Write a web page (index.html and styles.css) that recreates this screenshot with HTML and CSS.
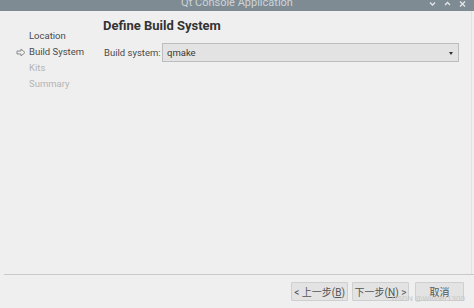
FILE: index.html
```html
<!DOCTYPE html>
<html lang="zh">
<head>
  <meta charset="UTF-8">
  <title>Qt Console Application</title>
  <link rel="stylesheet" href="styles.css">
</head>
<body>
  <div class="window">
    <div class="titlebar">
      <span class="title">Qt Console Application</span>
      <div class="controls">
        <svg width="7" height="6" viewBox="0 0 7 6"><path d="M1 1.5 L3.5 4 L6 1.5" fill="none" stroke="#e4e8ea" stroke-width="1.3"/></svg>
        <svg width="7" height="6" viewBox="0 0 7 6"><path d="M1 4 L3.5 1.5 L6 4" fill="none" stroke="#e4e8ea" stroke-width="1.3"/></svg>
        <svg width="7" height="6" viewBox="0 0 7 6"><path d="M1 0.5 L6 5.5 M6 0.5 L1 5.5" fill="none" stroke="#e4e8ea" stroke-width="1.3"/></svg>
      </div>
    </div>

    <div class="main">
      <!-- wizard steps -->
      <ul class="steps">
        <li>Location</li>
        <li class="current">
          <svg class="arrow" width="10" height="9" viewBox="0 0 10 9">
            <path d="M1 3 H5 V1 L9 4.5 L5 8 V6 H1 Z" fill="none" stroke="#8a8a8a" stroke-width="1"/>
          </svg>
          Build System
        </li>
        <li class="todo">Kits</li>
        <li class="todo">Summary</li>
      </ul>

      <div class="page">
        <h2>Define Build System</h2>
        <div class="field">
          <label>Build system:</label>
          <div class="combo">
            <span>qmake</span>
            <span class="drop"></span>
          </div>
        </div>
      </div>
    </div>

    <div class="footer">
      <button>&lt; 上一步(<u>B</u>)</button>
      <button>下一步(<u>N</u>) &gt;</button>
      <button class="cancel">取消</button>
      <span class="watermark">CSDN @Winner1300</span>
    </div>
  </div>
</body>
</html>
```

FILE: styles.css
```css
body {
  margin: 0;
  font-family: Roboto, "Noto Sans CJK SC", sans-serif;
  background-color: #efefef;
}
.window {
  width: 474px;
  height: 308px;
  display: flex;
  flex-direction: column;
  background-color: #efefef;
  overflow: hidden;
}
.titlebar {
  height: 11px;
  background-color: #7e8b93;
  position: relative;
  overflow: hidden;
  flex-shrink: 0;
}
.title {
  display: block;
  text-align: center;
  color: #cdd4d8;
  font-size: 11px;
  line-height: 11px;
  margin-top: -3px;
}
.controls {
  position: absolute;
  right: 8px;
  top: 1px;
  display: flex;
  gap: 8px;
}
.main {
  flex: 1;
  display: flex;
  border-right: 1px solid #e2e2e2;
  margin-right: 2px;
}
.steps {
  list-style: none;
  margin: 0;
  padding: 17px 0 0 29px;
  width: 74px;
  font-size: 9.5px;
  line-height: 16px;
  color: #4a4a4a;
}
.steps li {
  position: relative;
  white-space: nowrap;
}
.steps .todo {
  color: #b4b4b4;
}
.arrow {
  position: absolute;
  left: -13px;
  top: 4px;
}
.page {
  flex: 1;
  padding: 7px 0 0 0;
}
h2 {
  margin: 0;
  font-size: 13px;
  line-height: 16px;
  font-weight: bold;
  color: #333;
}
.field {
  display: flex;
  align-items: center;
  margin-top: 9px;
  font-size: 9.5px;
  color: #4a4a4a;
}
label {
  width: 58px;
  padding-left: 1px;
  white-space: nowrap;
}
.combo {
  width: 297px;
  height: 19px;
  box-sizing: border-box;
  border: 1px solid #bdbdbd;
  background-color: #e3e3e3;
  display: flex;
  align-items: center;
  justify-content: space-between;
  padding: 0 5px 0 4px;
  color: #3a3a3a;
}
.drop {
  width: 0;
  height: 0;
  border-left: 2px solid transparent;
  border-right: 2px solid transparent;
  border-top: 3px solid #333;
  margin-top: 2px;
}
.footer {
  height: 34px;
  flex-shrink: 0;
  border-top: 1px solid #c9c9c9;
  box-sizing: border-box;
  display: flex;
  align-items: flex-start;
  justify-content: flex-end;
  gap: 4px;
  padding: 7px 10px 0 0;
  margin-left: 4px;
  position: relative;
}
button {
  height: 19px;
  padding: 0;
  width: 57px;
  background-color: #e3e3e3;
  border: 1px solid #cfcfcf;
  border-radius: 1px;
  font-family: Roboto, "Noto Sans CJK SC", sans-serif;
  font-size: 10px;
  color: #555;
}
button.cancel {
  width: 49px;
  margin-left: 2px;
}
.watermark {
  position: absolute;
  right: 9px;
  bottom: 5px;
  font-size: 8px;
  line-height: 8px;
  color: #c8c8c8;
}
```
